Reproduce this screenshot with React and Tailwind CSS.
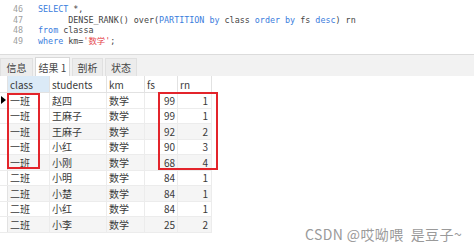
import React from "react";

const rows = [
  ["一班", "赵四", "数学", "99", "1"],
  ["一班", "王麻子", "数学", "99", "1"],
  ["一班", "王麻子", "数学", "92", "2"],
  ["一班", "小红", "数学", "90", "3"],
  ["一班", "小刚", "数学", "68", "4"],
  ["二班", "小明", "数学", "84", "1"],
  ["二班", "小楚", "数学", "84", "1"],
  ["二班", "小红", "数学", "84", "1"],
  ["二班", "小李", "数学", "25", "2"],
];

function K({ children }) {
  return <span className="text-[#3b7ddd]">{children}</span>;
}

function CodeLine({ n, children }) {
  return (
    <div className="flex h-[10.5px] items-center leading-[10.5px]">
      <div className="w-[23px] text-right text-[#a0a0a0]">{n}</div>
      <div className="pl-[15px] whitespace-pre text-[#444]">{children}</div>
    </div>
  );
}

export default function App() {
  return (
    <div
      className="relative w-[474px] h-[248px] overflow-hidden bg-white"
      style={{ fontFamily: '"Noto Sans CJK SC", "Noto Sans", sans-serif' }}
    >
      {/* editor */}
      <div
        className="h-[54px] overflow-hidden pt-[4px] text-[8.4px]"
        style={{ fontFamily: '"DejaVu Sans Mono", "Noto Sans CJK SC", monospace' }}
      >
        <CodeLine n="46">
          <K>SELECT</K> *,
        </CodeLine>
        <CodeLine n="47">
          {"      DENSE_RANK() over("}
          <K>PARTITION by</K> class <K>order by</K> fs <K>desc</K>) rn
        </CodeLine>
        <CodeLine n="48">
          <K>from</K> classa
        </CodeLine>
        <CodeLine n="49">
          <K>where</K> km=<span className="text-[#e5454d]">'数学'</span>;
        </CodeLine>
      </div>

      {/* tabs */}
      <div className="flex h-[22px] items-end gap-[2px] border-t border-[#dcdcdc] bg-[#f2f2f2] text-[10px] text-[#444]">
        <div className="flex h-[18px] w-[33px] items-center justify-center border border-b-0 border-[#e0e0e0] bg-[#ececec]">
          信息
        </div>
        <div className="flex h-[19px] w-[35px] items-center justify-center border border-b-0 border-[#d8d8d8] bg-white">
          结果 1
        </div>
        <div className="flex h-[18px] w-[31px] items-center justify-center border border-b-0 border-[#e0e0e0] bg-[#ececec]">
          剖析
        </div>
        <div className="flex h-[18px] w-[32px] items-center justify-center border border-b-0 border-[#e0e0e0] bg-[#ececec]">
          状态
        </div>
      </div>

      {/* grid */}
      <div className="w-[212px] text-[10px] text-[#3a3a3a]">
        <div className="flex h-[17px] border-b border-[#e2e2e2]">
          <div className="w-[8px] border-r border-[#e2e2e2]" />
          <div className="flex w-[42px] items-center border-r border-[#e2e2e2] bg-[#dbeaf7] pl-[2px]">class</div>
          <div className="flex w-[57px] items-center border-r border-[#e2e2e2] pl-[2px]">students</div>
          <div className="flex w-[38px] items-center border-r border-[#e2e2e2] pl-[2px]">km</div>
          <div className="flex w-[33px] items-center border-r border-[#e2e2e2] pl-[2px]">fs</div>
          <div className="flex w-[34px] items-center border-r border-[#e2e2e2] pl-[2px]">rn</div>
        </div>
        {rows.map((r, i) => (
          <div
            key={i}
            className={
              "flex h-[15.5px] border-b border-[#ececec] " +
              (i % 2 === 0 && i > 0 ? "bg-[#f5f5f5]" : "bg-white")
            }
          >
            <div className="relative w-[8px] border-r border-[#e2e2e2] bg-white">
              {i === 0 && (
                <div className="absolute left-[1px] top-[3px] h-0 w-0 border-y-[4.5px] border-l-[5px] border-y-transparent border-l-black" />
              )}
            </div>
            <div className="flex w-[42px] items-center border-r border-[#ececec] pl-[2px]">{r[0]}</div>
            <div className="flex w-[57px] items-center border-r border-[#ececec] pl-[2px]">{r[1]}</div>
            <div className="flex w-[38px] items-center border-r border-[#ececec] pl-[2px]">{r[2]}</div>
            <div className="flex w-[33px] items-center justify-end border-r border-[#ececec] pr-[2px]">{r[3]}</div>
            <div className="flex w-[34px] items-center justify-end border-r border-[#ececec] pr-[3px]">{r[4]}</div>
          </div>
        ))}
      </div>

      {/* annotation boxes */}
      <div className="absolute left-[7px] top-[93px] h-[76px] w-[33px] border-2 border-[#e3242b]" />
      <div className="absolute left-[158px] top-[92px] h-[78px] w-[60px] border-2 border-[#e3242b]" />

      {/* watermark */}
      <div className="absolute left-[305px] top-[225px] text-[14px] leading-[18px] text-[#9a9a9a] tracking-[0.4px]">
        CSDN @哎呦喂&nbsp;&nbsp;是豆子~
      </div>
    </div>
  );
}
